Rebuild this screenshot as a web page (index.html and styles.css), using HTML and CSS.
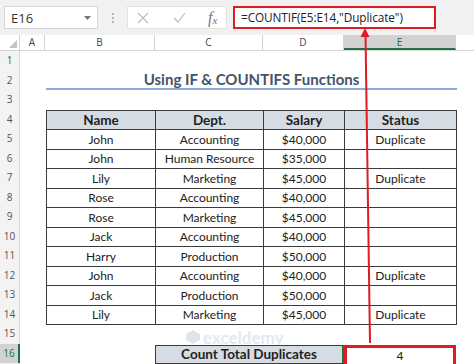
FILE: index.html
```html
<!DOCTYPE html>
<html lang="en">
<head>
  <meta charset="UTF-8">
  <title>Using IF &amp; COUNTIFS Functions</title>
  <link rel="stylesheet" href="styles.css">
</head>
<body>
  <div class="formula-bar">
    <div class="name-box">
      <span>E16</span>
      <svg class="caret" width="7" height="4" viewBox="0 0 7 4"><path d="M0 0h7L3.5 4z" fill="#777"/></svg>
    </div>
    <div class="grip"><i></i><i></i><i></i></div>
    <div class="fx-tools">
      <svg width="12" height="12" viewBox="0 0 12 12"><path d="M1 1l10 10M11 1L1 11" stroke="#bdbdbd" stroke-width="1.2"/></svg>
      <svg width="13" height="11" viewBox="0 0 13 11"><path d="M1 6l4 4 7-9" stroke="#bdbdbd" stroke-width="1.2" fill="none"/></svg>
      <span class="fx">f<sub>x</sub></span>
    </div>
    <div class="formula">=COUNTIF(E5:E14,"Duplicate")</div>
  </div>

  <div class="sheet">
    <div class="col-heads">
      <div class="corner"><svg width="8" height="8" viewBox="0 0 8 8"><path d="M8 0v8H0z" fill="#c4c4c4"/></svg></div>
      <div class="col-a">A</div>
      <div class="col-b">B</div>
      <div class="col-c">C</div>
      <div class="col-d">D</div>
      <div class="col-e selected">E</div>
      <div class="col-rest"></div>
    </div>

    <div class="grid-body">
      <div class="row-heads">
        <div>1</div><div>2</div><div>3</div><div>4</div>
        <div>5</div><div>6</div><div>7</div><div>8</div>
        <div>9</div><div>10</div><div>11</div><div>12</div>
        <div>13</div><div>14</div><div>15</div><div class="selected">16</div>
      </div>

      <div class="cells">
        <div class="row"></div>
        <div class="row title-row"><div class="title">Using IF &amp; COUNTIFS Functions</div></div>
        <div class="row"></div>

        <table class="data">
          <thead>
            <tr><th class="w-name">Name</th><th class="w-dept">Dept.</th><th class="w-sal">Salary</th><th class="w-stat">Status</th></tr>
          </thead>
          <tbody>
            <tr><td>John</td><td>Accounting</td><td>$40,000</td><td>Duplicate</td></tr>
            <tr><td>John</td><td>Human Resource</td><td>$35,000</td><td></td></tr>
            <tr><td>Lily</td><td>Marketing</td><td>$45,000</td><td>Duplicate</td></tr>
            <tr><td>Rose</td><td>Accounting</td><td>$40,000</td><td></td></tr>
            <tr><td>Rose</td><td>Marketing</td><td>$45,000</td><td></td></tr>
            <tr><td>Jack</td><td>Accounting</td><td>$40,000</td><td></td></tr>
            <tr><td>Harry</td><td>Production</td><td>$50,000</td><td></td></tr>
            <tr><td>John</td><td>Accounting</td><td>$40,000</td><td>Duplicate</td></tr>
            <tr><td>Jack</td><td>Production</td><td>$50,000</td><td></td></tr>
            <tr><td>Lily</td><td>Marketing</td><td>$45,000</td><td>Duplicate</td></tr>
          </tbody>
        </table>

        <div class="row watermark-row">
          <div class="watermark">
            <svg width="14" height="14" viewBox="0 0 14 14"><path d="M7 0l7 4v6l-7 4-7-4V4z" fill="#dfe4ee"/></svg>
            <span>exceldemy</span>
          </div>
        </div>
        <div class="row total-row">
          <div class="total-label">Count Total Duplicates</div>
          <div class="total-value">4</div>
        </div>
      </div>

      <svg class="pointer" width="474" height="364" viewBox="0 0 474 364">
        <path d="M365.5 34L370 343" stroke="#e01b22" stroke-width="2" fill="none"/>
        <path d="M365 28l-4.5 9h9z" fill="#e01b22"/>
      </svg>
    </div>
  </div>
</body>
</html>
```

FILE: styles.css
```css
/* spreadsheet look */
:root {
  --grid-line: #d4d4d4;
  --head-bg: #f3f3f3;
  --head-text: #555;
  --table-line: #3b3b3b;
  --header-fill: #d6dce4;
  --excel-green: #217346;
  --red: #e01b22;
  --row-h: 19.5px;
}

body {
  margin: 0;
  width: 474px;
  height: 364px;
  overflow: hidden;
  background: #fff;
  font-family: 'Lato', 'Liberation Sans', sans-serif;
  color: #222;
  position: relative;
}

.formula-bar {
  display: flex;
  align-items: center;
  height: 35px;
  padding: 0 0 0 4px;
  background: #f1f1f1;
  box-sizing: border-box;
}

.name-box {
  display: flex;
  align-items: center;
  justify-content: space-between;
  width: 94px;
  height: 23px;
  padding: 0 6px 0 6px;
  box-sizing: border-box;
  background: #fff;
  border: 1px solid #d6d6d6;
  font-family: 'Open Sans', sans-serif;
  font-size: 13px;
  color: #333;
}

.grip {
  display: flex;
  flex-direction: column;
  gap: 2px;
  margin: 0 13px 0 14px;
}

.grip i {
  width: 2px;
  height: 2px;
  background: #b5b5b5;
}

.fx-tools {
  display: flex;
  align-items: center;
  gap: 24px;
  width: 100px;
  height: 23px;
  padding-left: 9px;
  box-sizing: border-box;
  background: #fff;
  border: 1px solid #e2e2e2;
}

.fx {
  font-family: 'Liberation Serif', serif;
  font-style: italic;
  font-size: 16px;
  color: #777;
  margin-left: -2px;
}

.fx sub {
  font-size: 11px;
  vertical-align: -1px;
}

.formula {
  width: 203px;
  height: 23px;
  margin-left: 6px;
  padding-left: 6px;
  box-sizing: border-box;
  border: 2px solid var(--red);
  background: #fff;
  font-family: 'Open Sans', sans-serif;
  font-size: 11.8px;
  letter-spacing: -0.1px;
  line-height: 19px;
  color: #222;
  white-space: nowrap;
}

.sheet {
  position: relative;
}

.col-heads {
  display: flex;
  height: 15px;
  background: #fff;
  border-bottom: 1px solid var(--grid-line);
  font-family: 'Open Sans', sans-serif;
  font-size: 10px;
  line-height: 15px;
  color: #444;
  text-align: center;
}

.col-heads > div {
  border-right: 1px solid var(--grid-line);
  box-sizing: border-box;
}

.corner {
  width: 20px;
  display: flex;
  align-items: flex-end;
  justify-content: flex-end;
  padding: 0 2px 2px 0;
  box-sizing: border-box;
}

.col-a { width: 25px; }
.col-b { width: 110px; }
.col-c { width: 108px; }
.col-d { width: 81px; }
.col-e { width: 112px; }
.col-rest { flex: 1; border-right: none !important; }

.col-heads .selected {
  background: #d2d2d2;
  border-bottom: 2px solid var(--excel-green);
  color: #217346;
}

.grid-body {
  display: flex;
}

.row-heads {
  width: 20px;
  flex: none;
  background: var(--head-bg);
  border-right: 1px solid var(--grid-line);
  box-sizing: border-box;
  font-family: 'Open Sans', sans-serif;
  font-size: 10px;
  color: #555;
  text-align: center;
}

.row-heads div {
  height: var(--row-h);
  line-height: var(--row-h);
}

.row-heads .selected {
  background: #d2d2d2;
  border-right: 2px solid var(--excel-green);
  margin-right: -1px;
  color: #217346;
}

.cells {
  padding-left: 25px;
  width: 436px;
}

.row {
  height: var(--row-h);
}

.title-row {
  display: flex;
  align-items: flex-end;
  justify-content: center;
  border-bottom: 2px solid #8ea9db;
  box-sizing: border-box;
  width: 411px;
  margin-left: 1px;
}

.title {
  font-size: 15px;
  font-weight: 700;
  color: #44546a;
  line-height: 18px;
}

.data {
  border-collapse: collapse;
  margin-left: 1px;
  font-size: 12px;
  table-layout: fixed;
}

.data th,
.data td {
  height: var(--row-h);
  padding: 0;
  border: 1px solid var(--table-line);
  text-align: center;
  box-sizing: border-box;
  color: #222;
  white-space: nowrap;
  overflow: hidden;
}

.data th {
  background: var(--header-fill);
  font-size: 13.5px;
  font-weight: 700;
}

.w-name { width: 109px; }
.w-dept { width: 108px; }
.w-sal { width: 81px; }
.w-stat { width: 112px; }

.watermark-row {
  display: flex;
  align-items: flex-end;
  padding-left: 141px;
}

.watermark {
  display: flex;
  align-items: center;
  gap: 3px;
  font-size: 17px;
  font-weight: 700;
  color: #e4e8f1;
  line-height: 15px;
  margin-bottom: 0;
}

.total-row {
  display: flex;
  padding-left: 110px;
}

.total-label {
  width: 189px;
  height: var(--row-h);
  box-sizing: border-box;
  background: var(--header-fill);
  border: 1px solid var(--table-line);
  border-right: 2px solid var(--excel-green);
  font-size: 13.5px;
  font-weight: 700;
  text-align: center;
  line-height: 17px;
}

.total-value {
  width: 112px;
  height: 22px;
  box-sizing: border-box;
  border: 3px solid var(--red);
  font-size: 12px;
  text-align: center;
  line-height: 16px;
  position: relative;
  z-index: 1;
  background: #fff;
}

.pointer {
  position: absolute;
  left: 0;
  top: -35px;
  pointer-events: none;
}
```
